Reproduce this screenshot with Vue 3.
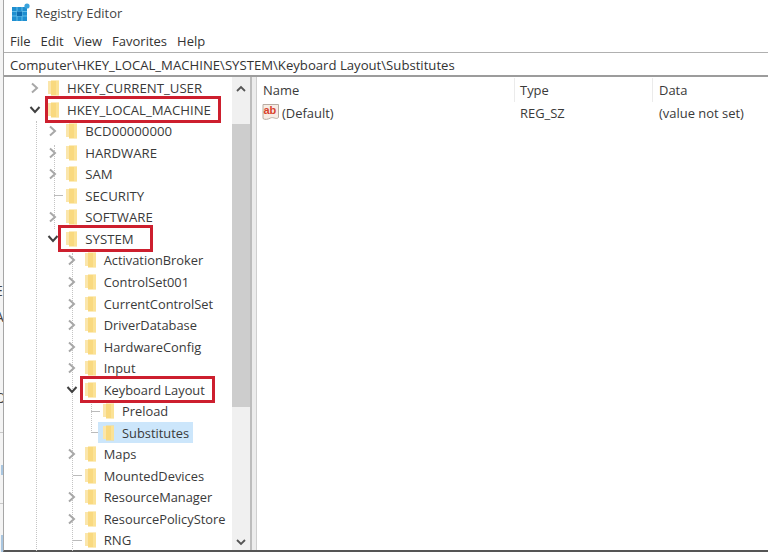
<script setup>
const rows = [
  { label: 'HKEY_CURRENT_USER', level: 0, state: 'closed', caps: true },
  { label: 'HKEY_LOCAL_MACHINE', level: 0, state: 'open', caps: true, mark: { left: 0, width: 176 } },
  { label: 'BCD00000000', level: 1, state: 'closed', caps: true },
  { label: 'HARDWARE', level: 1, state: 'closed', caps: true },
  { label: 'SAM', level: 1, state: 'closed', caps: true },
  { label: 'SECURITY', level: 1, state: 'leaf', caps: true },
  { label: 'SOFTWARE', level: 1, state: 'closed', caps: true },
  { label: 'SYSTEM', level: 1, state: 'open', caps: true, mark: { left: -5, width: 95 } },
  { label: 'ActivationBroker', level: 2, state: 'closed' },
  { label: 'ControlSet001', level: 2, state: 'closed' },
  { label: 'CurrentControlSet', level: 2, state: 'closed' },
  { label: 'DriverDatabase', level: 2, state: 'closed' },
  { label: 'HardwareConfig', level: 2, state: 'closed' },
  { label: 'Input', level: 2, state: 'closed' },
  { label: 'Keyboard Layout', level: 2, state: 'open', mark: { left: -2, width: 135 } },
  { label: 'Preload', level: 3, state: 'leaf' },
  { label: 'Substitutes', level: 3, state: 'leaf', selected: true },
  { label: 'Maps', level: 2, state: 'closed' },
  { label: 'MountedDevices', level: 2, state: 'leaf' },
  { label: 'ResourceManager', level: 2, state: 'closed' },
  { label: 'ResourcePolicyStore', level: 2, state: 'closed' },
  { label: 'RNG', level: 2, state: 'leaf', caps: true }
]
const menus = ['File', 'Edit', 'View', 'Favorites', 'Help']
const guides = [
  { x: 32, y: 44, h: 430 },
  { x: 50, y: 68, h: 84 },
  { x: 68, y: 176, h: 298 },
  { x: 87, y: 324, h: 32 }
]
function guideStyle(g) {
  return { left: g.x + 'px', top: g.y + 'px', height: g.h + 'px' }
}
function markStyle(m) {
  return { left: m.left + 'px', width: m.width + 'px' }
}
</script>

<template>
  <div class="screen">
    <div class="desk">
      <span class="behind b1">E</span>
      <span class="behind b2">A</span>
      <span class="behind b3">O</span>
      <i class="rule r1"></i>
      <i class="rule r2"></i>
      <i class="blue b4"></i>
      <i class="blue b5"></i>
    </div>
    <div class="win">
      <header class="title">
        <svg class="appicon" width="18" height="18" viewBox="0 0 18 18">
          <rect x="0" y="4" width="15" height="14" fill="#1f8fd0" />
          <path d="M5 4v14M10 4v14M0 8.500h15M0 13h15" stroke="#62bce8" stroke-width="1" />
          <rect x="5" y="8.500" width="5" height="4.500" fill="#0f6cb0" />
          <circle cx="15" cy="3" r="2.600" fill="#3aa3dc" />
        </svg>
        <span>Registry Editor</span>
      </header>
      <nav class="menu">
        <span v-for="m in menus" :key="m">{{ m }}</span>
      </nav>
      <div class="address">Computer\HKEY_LOCAL_MACHINE\SYSTEM\Keyboard Layout\Substitutes</div>
      <main class="panes">
        <section class="tree">
          <div class="rows">
            <i v-for="g in guides" :key="g.x" class="guide" :style="guideStyle(g)"></i>
            <div v-for="r in rows" :key="r.label" class="row" :class="'lv' + r.level">
              <span class="twist" :class="{ leaf: r.state === 'leaf' }">
                <svg v-if="r.state === 'closed'" width="10" height="12" viewBox="0 0 10 12">
                  <path d="M2 1.500 7 6 2 10.500" fill="none" stroke="#a8a8a8" stroke-width="2" />
                </svg>
                <svg v-else-if="r.state === 'open'" width="12" height="10" viewBox="0 0 12 10">
                  <path d="M1.500 2 6 7 10.500 2" fill="none" stroke="#404040" stroke-width="2" />
                </svg>
                <i v-else class="stub"></i>
              </span>
              <span class="node" :class="{ sel: r.selected }">
                <svg class="folder" width="12" height="18" viewBox="0 0 12 18">
                  <rect x="0" y="2" width="5" height="13" fill="#fbe6ab" />
                  <rect x="3" y="1.500" width="8" height="15" fill="#f9d97f" />
                  <rect x="8" y="2" width="3" height="14" fill="#fbe296" />
                </svg>
                <span class="label" :class="{ caps: r.caps }">{{ r.label }}</span>
                <i v-if="r.mark" class="mark" :style="markStyle(r.mark)"></i>
              </span>
            </div>
          </div>
          <div class="scroll">
            <svg class="arrow" width="12" height="8" viewBox="0 0 12 8"><path d="M2 6 6 2l4 4" fill="none" stroke="#555" stroke-width="1.800" /></svg>
            <div class="track"><div class="thumb"></div></div>
            <svg class="arrow" width="12" height="8" viewBox="0 0 12 8"><path d="M2 2l4 4 4-4" fill="none" stroke="#555" stroke-width="1.800" /></svg>
          </div>
        </section>
        <div class="split"></div>
        <section class="list">
          <div class="cols head">
            <span class="cname">Name</span>
            <span class="ctype">Type</span>
            <span class="cdata">Data</span>
          </div>
          <div class="cols item">
            <span class="cname withicon">
              <svg width="18" height="18" viewBox="0 0 18 18">
                <path d="M1 .5h15.500v13c-2.500 2.500-5-1-8 .5s-5.500 2-7.500 .5z" fill="#f7ece4" stroke="#b9aca2" />
                <text x="1.500" y="9.500" class="ab">ab</text>
              </svg>
              (Default)
            </span>
            <span class="ctype">REG_SZ</span>
            <span class="cdata">(value not set)</span>
          </div>
        </section>
      </main>
    </div>
  </div>
</template>

<style>
html, body { margin: 0; background: #fff; }
</style>

<style scoped>
.screen {
  width: 768px;
  height: 552px;
  display: flex;
  overflow: hidden;
  background: #fff;
  font-family: "Open Sans", "Noto Sans", sans-serif;
  color: #333;
}
.desk { width: 3px; flex: none; background: #f4f4f4; position: relative; overflow: hidden; }
.behind { position: absolute; left: -5px; font-size: 14px; line-height: 14px; color: #444; }
.b1 { top: 284px; }
.b2 { top: 310px; }
.b3 { top: 391px; }
.rule { position: absolute; left: 0; width: 3px; height: 1px; background: #c8c8c8; }
.r1 { top: 432px; }
.r2 { top: 503px; }
.blue { position: absolute; left: 1px; width: 2px; background: #a9c6e0; }
.b4 { top: 465px; height: 10px; }
.b5 { top: 535px; height: 17px; }
.win {
  flex: 1;
  min-width: 0;
  display: flex;
  flex-direction: column;
  border-left: 1px solid #a6a6a6;
  border-bottom: 2px solid #555;
}
.title {
  height: 26px;
  padding-bottom: 4px;
  display: flex;
  align-items: center;
  gap: 5px;
  padding-left: 8px;
  font-size: 12.900px;
  color: #444;
}
.appicon { margin-top: -2px; }
.menu {
  height: 22px;
  display: flex;
  align-items: center;
  gap: 10px;
  padding-left: 6px;
  font-size: 13px;
  color: #333;
}
.address {
  height: 22px;
  line-height: 24px;
  padding-left: 6px;
  border-top: 1px solid #b0b0b0;
  border-bottom: 2px solid #9c9c9c;
  font-size: 13.150px;
  color: #333;
}
.panes { flex: 1; min-height: 0; display: flex; }
.tree { width: 246px; flex: none; display: flex; }
.rows { flex: 1; min-width: 0; padding-top: 0.600px; position: relative; }
.guide { position: absolute; width: 0; border-left: 1px dotted #c4c4c4; }
.row { height: 21.520px; display: flex; align-items: center; position: relative; }
.lv0 { padding-left: 23px; }
.lv1 { padding-left: 41.300px; }
.lv2 { padding-left: 59.700px; }
.lv3 { padding-left: 78px; }
.twist {
  width: 18px;
  height: 16px;
  padding-right: 2px;
  box-sizing: border-box;
  display: flex;
  align-items: center;
  justify-content: center;
  flex: none;
}
.twist.leaf { justify-content: flex-start; padding: 0 0 0 9px; }
.stub { width: 9px; height: 1px; background: #bbb; flex: none; }
.node { display: flex; align-items: center; height: 21px; padding-left: 3px; padding-right: 4px; position: relative; }
.node.sel { background: #cce6fb; margin-left: -2px; padding-left: 5px; }
.mark {
  position: absolute;
  top: -3px;
  height: 27px;
  box-sizing: border-box;
  border: 3px solid #cd1f2e;
}
.folder { flex: none; margin-right: 7px; }
.label { font-size: 12.850px; white-space: nowrap; color: #3a3a3a; }
.label.caps { font-size: 13.200px; }
.scroll { width: 18px; flex: none; background: #f0f0f0; display: flex; flex-direction: column; align-items: center; }
.arrow { flex: none; margin: 8px 0 4px; }
.track { flex: 1; width: 100%; }
.thumb { height: 283px; background: #cdcdcd; margin-top: 27px; }
.split { width: 7px; flex: none; background: #ececec; border-left: 2px solid #bcbcbc; border-right: 1px solid #cfcfcf; box-sizing: border-box; }
.list { flex: 1; min-width: 0; }
.cols { display: flex; font-size: 12.950px; color: #3a3a3a; }
.head { height: 25px; align-items: center; padding-top: 1px; box-sizing: border-box; }
.head .cname, .head .ctype { border-right: 1px solid #ebebeb; line-height: 24px; }
.item { height: 21px; align-items: center; }
.cname { width: 258px; padding-left: 6px; box-sizing: border-box; flex: none; }
.withicon { display: flex; align-items: center; gap: 2px; padding-left: 5px; }
.ctype { width: 138px; padding-left: 5px; box-sizing: border-box; flex: none; }
.cdata { padding-left: 6px; }
.ab { font: bold 11px "Liberation Sans", sans-serif; fill: #d8412c; }
</style>
